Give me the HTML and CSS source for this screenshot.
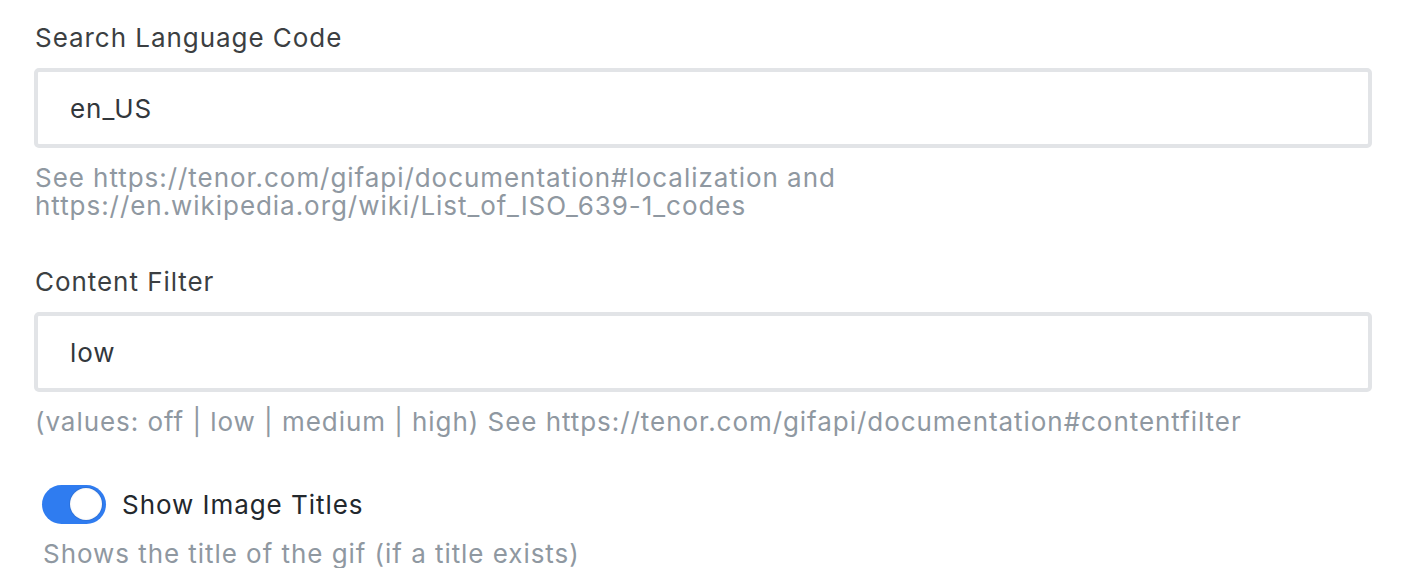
FILE: index.html
```html
<!DOCTYPE html>
<html lang="en">
<head>
<meta charset="utf-8">
<title>Settings</title>
<link rel="stylesheet" href="styles.css">
</head>
<body>
<div class="settings">
  <div class="field">
    <label class="field-label" for="lang">Search Language Code</label>
    <input class="field-input" id="lang" type="text" value="en_US">
    <p class="field-help">See https://tenor.com/gifapi/documentation#localization and<br>https://en.wikipedia.org/wiki/List_of_ISO_639-1_codes</p>
  </div>
  <div class="field">
    <label class="field-label" for="filter">Content Filter</label>
    <input class="field-input" id="filter" type="text" value="low">
    <p class="field-help">(values: off | low | medium | high) See https://tenor.com/gifapi/documentation#contentfilter</p>
  </div>
  <div class="field field-toggle">
    <div class="toggle-row">
      <span class="toggle is-on"><span class="toggle-knob"></span></span>
      <span class="toggle-label">Show Image Titles</span>
    </div>
    <p class="field-help">Shows the title of the gif (if a title exists)</p>
  </div>
</div>
</body>
</html>
```
FILE: styles.css
```css
* { box-sizing: border-box; }
html, body { margin: 0; padding: 0; background: #fff; }
body {
  font-family: Inter, "Noto Sans", "Liberation Sans", sans-serif;
  font-size: 26px;
  letter-spacing: 0.95px;
  color: #32373c;
}
.settings {
  padding: 20px 38px 0 34px;
}
.field { margin-bottom: 44px; }
.field:last-child { margin-bottom: 0; }
.field-label {
  display: block;
  line-height: 36px;
  height: 36px;
  margin-bottom: 12px;
  padding-left: 1px;
  color: #3c3f42;
}
.field-input {
  display: block;
  width: 100%;
  height: 80px;
  border: 4px solid #e2e4e7;
  border-radius: 5px;
  padding: 0 0 0 32px;
  font: inherit;
  letter-spacing: inherit;
  color: #32373c;
  background: #fff;
  outline: none;
}
.field-help {
  margin: 16px 0 0 1px;
  font-size: 26px;
  line-height: 28px;
  color: #8f98a1;
}
.field-toggle { padding-left: 8px; margin-top: 48px; }
.toggle-row {
  display: flex;
  align-items: center;
  height: 40px;
  gap: 16px;
}
.toggle {
  position: relative;
  display: inline-block;
  width: 64px;
  height: 39px;
  border-radius: 20px;
  background: #e2e4e7;
}
.toggle.is-on { background: #2f7cf0; }
.toggle-knob {
  position: absolute;
  top: 3.5px;
  right: 4px;
  width: 32px;
  height: 32px;
  border-radius: 50%;
  background: #fff;
  box-shadow: 0 0 0 1px rgba(0,0,0,0.08), inset 0 0 2px rgba(0,0,0,0.1);
}
.toggle-label { color: #23282d; }
```
